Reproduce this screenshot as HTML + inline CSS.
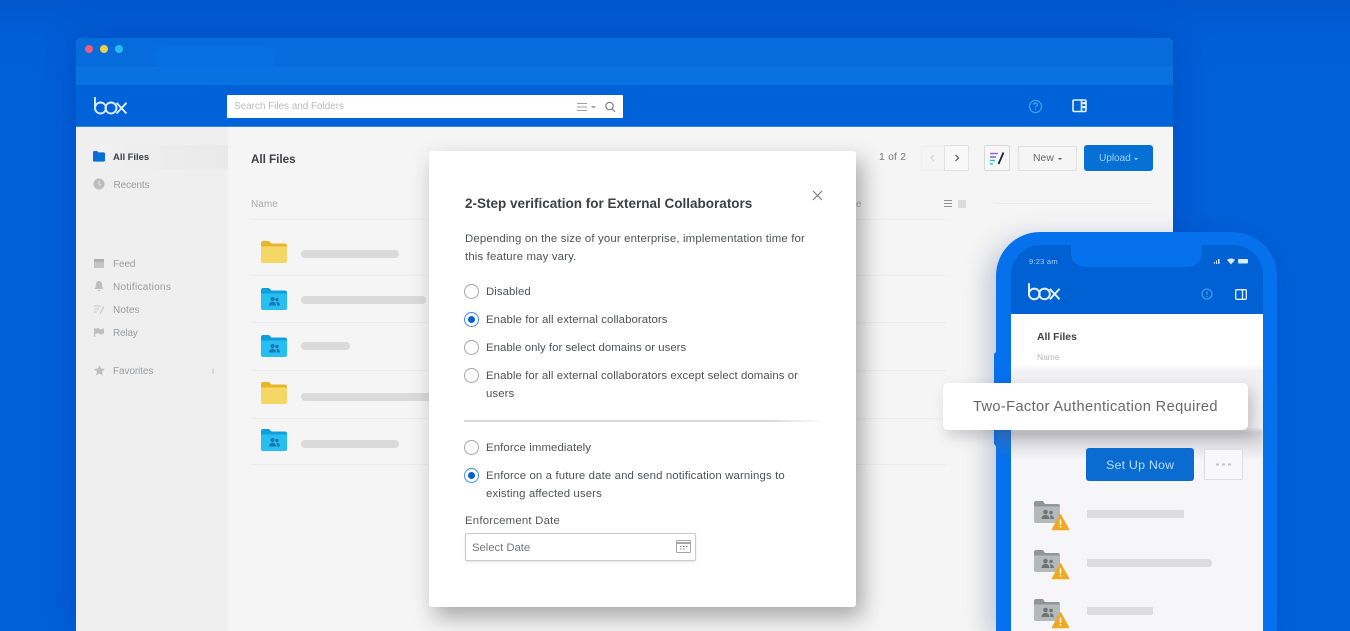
<!DOCTYPE html>
<html><head><meta charset="utf-8">
<style>
*{box-sizing:border-box}
html,body{margin:0;padding:0;overflow:hidden}
body{width:1350px;height:631px;overflow:hidden;position:relative;background:#0060da;font-family:"Liberation Sans",sans-serif;color:#4b4d50}
#clip{position:absolute;left:0;top:0;width:1350px;height:631px;overflow:hidden}
#stage{position:absolute;left:0;top:0;width:1350px;height:631px;overflow:hidden;background:linear-gradient(180deg,#0057cc 0,#005dd6 30px,#0060da 80px);filter:blur(.35px)}
.a{position:absolute}
.t{position:absolute;white-space:nowrap;line-height:1}
.bar{position:absolute;height:9px;border-radius:5px;background:#dadada}
.ln{position:absolute;height:1px;background:#ececec}
.radio{position:absolute;width:15px;height:15px;border-radius:50%;border:1.5px solid #a3a6a9;background:#fff}
.radio.on{border:1.5px solid #3d8fe0}
.radio.on:after{content:"";position:absolute;left:2.5px;top:2.5px;width:7px;height:7px;border-radius:50%;background:#0a5fc8}
.mt{font-size:11.4px;color:#4f5255;letter-spacing:.08px}
.nav{font-size:10px;color:#9a9c9e;letter-spacing:0}
svg{position:absolute;overflow:visible}
</style></head><body><div id="clip"><div id="stage">

<!-- browser window -->
<div class="a" style="left:76px;top:38px;width:1097px;height:593px;background:#f1f1f2;border-radius:6px 6px 0 0;box-shadow:0 0 36px rgba(0,40,130,.32)"></div>
<div class="a" style="left:76px;top:38px;width:1097px;height:48px;background:#066cdc;border-radius:6px 6px 0 0"></div>
<div class="a" style="left:155px;top:46px;width:120px;height:22px;background:#0870e0;border-radius:6px 6px 0 0;filter:blur(3px)"></div>
<div class="a" style="left:76px;top:67px;width:1097px;height:19px;background:#0872e0"></div>
<div class="a" style="left:85px;top:45px;width:8px;height:8px;border-radius:50%;background:#ef5a7d"></div>
<div class="a" style="left:100px;top:45px;width:8px;height:8px;border-radius:50%;background:#f2cc46"></div>
<div class="a" style="left:115px;top:45px;width:8px;height:8px;border-radius:50%;background:#27bdf0"></div>
<!-- header -->
<div class="a" style="left:76px;top:85px;width:1097px;height:42px;background:#0062d8;border-bottom:1px solid #2e86e6"></div>
<svg style="left:94px;top:97px" width="34" height="18" viewBox="0 0 34 18" fill="none" stroke="#dcecff" stroke-width="1.9">
<path d="M1 0v11.500"/><circle cx="6.500" cy="11" r="5.500"/><circle cx="17" cy="11" r="5.500"/><path d="M22.500 5.800l10 10.700M32.500 5.800l-10 10.700"/></svg>
<div class="a" style="left:227px;top:95px;width:396px;height:23px;background:#fff;border-radius:1px"></div>
<div class="t" style="left:234px;top:101.500px;font-size:10px;color:#b9bbbd;letter-spacing:-.05px">Search Files and Folders</div>
<svg style="left:576px;top:101px" width="40" height="12" viewBox="0 0 40 12" fill="none" stroke="#9ea0a2" stroke-width="1">
<path d="M1 2.500h10M1 6h10M1 9.500h10"/><path d="M15 5l2.500 2.500L20 5z" fill="#9ea0a2" stroke="none"/><circle cx="33.500" cy="5" r="3.700" stroke="#77797c" stroke-width="1.200"/><path d="M36.300 8l2.700 2.700" stroke="#77797c" stroke-width="1.200"/></svg>
<svg style="left:1028px;top:99px" width="15" height="15" viewBox="0 0 15 15" fill="none" stroke="#4aa0f0" stroke-width="1.200">
<circle cx="7.500" cy="7.500" r="6"/><path d="M5.800 5.600c.3-2.200 3.600-2 3.600.1 0 1.300-1.700 1.400-1.900 2.700M7.500 10v1"/></svg>
<svg style="left:1072px;top:99px" width="15" height="14" viewBox="0 0 15 14" fill="none" stroke="#e6f1ff" stroke-width="1.600">
<rect x="1" y="1" width="13" height="11.500" rx="1.200"/><path d="M9.500 1v11.500"/><path d="M10.500 3h3v2.200h-3zM10.500 7h3v2.200h-3z" fill="#e6f1ff" stroke="none"/></svg>

<!-- sidebar -->
<div class="a" style="left:76px;top:127px;width:152px;height:504px;background:#efeff0"></div>
<div class="a" style="left:228px;top:127px;width:945px;height:504px;background:#f5f5f5"></div>
<div class="a" style="left:100px;top:145px;width:128px;height:24px;background:linear-gradient(90deg,#f0f0f1,#e9e9ea)"></div>
<svg style="left:93px;top:151px" width="12" height="11" viewBox="0 0 12 11"><path d="M0 1.200C0 .5.500 0 1.200 0h3l1.300 1.400h5.200c.7 0 1.300.5 1.300 1.200v6.800c0 .7-.6 1.200-1.300 1.200H1.200C.5 10.600 0 10.100 0 9.400z" fill="#0a6ed8"/></svg>
<div class="t" style="left:113px;top:152.500px;font-size:9.500px;font-weight:bold;color:#3c3e41;letter-spacing:-.03px">All Files</div>
<svg style="left:93px;top:178px" width="12" height="12" viewBox="0 0 12 12"><circle cx="6" cy="6" r="5.500" fill="#bcbdbf"/><path d="M6 3v3.300l2 1.200" fill="none" stroke="#efeff0" stroke-width=".9"/></svg>
<div class="t nav" style="left:113.500px;top:181px;letter-spacing:-.1px">Recents</div>
<div class="a" style="left:94px;top:259px;width:10px;height:9px;background:#c3c4c6;border-top:3px solid #aeafb1"></div>
<div class="t nav" style="left:113px;top:260px;letter-spacing:-.1px">Feed</div>
<svg style="left:94px;top:281px" width="10" height="11" viewBox="0 0 10 11"><path d="M5 0c2.200 0 3.100 1.800 3.100 3.600 0 2.200.6 3.300 1.400 4.400H.5c.8-1.100 1.400-2.200 1.400-4.400C1.900 1.800 2.800 0 5 0zM3.600 9h2.800c0 1.400-2.800 1.400-2.800 0z" fill="#bdbec0"/></svg>
<div class="t nav" style="left:113px;top:283px;letter-spacing:.28px">Notifications</div>
<svg style="left:94px;top:305px" width="11" height="10" viewBox="0 0 11 10" fill="none" stroke="#c6c7c9" stroke-width="1"><path d="M0 1h7M0 4h5M0 7h3M10 1L6 9"/></svg>
<div class="t nav" style="left:113px;top:306px;letter-spacing:.1px">Notes</div>
<svg style="left:94px;top:328px" width="10" height="9" viewBox="0 0 10 9"><path d="M0 0h1.200v9H0zM1.200 1l3-1 2 1.500L10 .5v5L6.200 6.500l-2-1.500-3 1z" fill="#bdbec0"/></svg>
<div class="t nav" style="left:113px;top:329px;letter-spacing:-.2px">Relay</div>
<svg style="left:94px;top:365px" width="11" height="11" viewBox="0 0 11 11"><path d="M5.500 0l1.600 3.600 3.900.4-3 2.600.9 3.900-3.400-2-3.400 2 .9-3.900-3-2.600 3.900-.4z" fill="#bdbec0"/></svg>
<div class="t nav" style="left:113px;top:366.500px;letter-spacing:-.1px">Favorites</div>
<div class="a" style="left:212px;top:369px;width:2px;height:5px;background:#d5d6d7"></div>

<!-- main list -->
<div class="t" style="left:251px;top:153.500px;font-size:11.700px;font-weight:bold;color:#3f4144;letter-spacing:-.03px">All Files</div>
<div class="t" style="left:251px;top:200px;font-size:10px;color:#a9abad;letter-spacing:.05px">Name</div>
<div class="ln" style="left:252px;top:219px;width:180px"></div>
<div class="ln" style="left:856px;top:219px;width:90px"></div>
<div class="t" style="left:856px;top:200px;font-size:10px;color:#a9abad">e</div>
<div class="ln" style="left:252px;top:275px;width:180px"></div><div class="ln" style="left:856px;top:275px;width:90px"></div>
<div class="ln" style="left:252px;top:322px;width:180px"></div><div class="ln" style="left:856px;top:322px;width:90px"></div>
<div class="ln" style="left:252px;top:370px;width:180px"></div><div class="ln" style="left:856px;top:370px;width:90px"></div>
<div class="ln" style="left:252px;top:418px;width:180px"></div><div class="ln" style="left:856px;top:418px;width:90px"></div>
<div class="ln" style="left:252px;top:464px;width:180px"></div><div class="ln" style="left:856px;top:464px;width:90px"></div>

<svg width="0" height="0"><defs>
<g id="fy"><path d="M0 2C0 .9.900 0 2 0h6l2.500 2.500H24c1 0 2 .8 2 2V20c0 1-.9 2-2 2H2c-1.100 0-2-1-2-2z" fill="#e9b52c"/><path d="M0 5.500h26V20c0 1-.9 2-2 2H2c-1.100 0-2-1-2-2z" fill="#f5d765"/></g>
<g id="fb"><path d="M0 2C0 .9.900 0 2 0h6l2.500 2.500H24c1 0 2 .8 2 2V20c0 1-.9 2-2 2H2c-1.100 0-2-1-2-2z" fill="#0e9fdc"/><path d="M0 5.500h26V20c0 1-.9 2-2 2H2c-1.100 0-2-1-2-2z" fill="#27bff2"/><circle cx="11.500" cy="11" r="2.100" fill="#1579b0"/><circle cx="16" cy="11.500" r="1.700" fill="#1579b0"/><path d="M8 17.500c0-5 7-5 7 0zM15.500 14c2-.4 3.500 1 3.500 3.500h-3c0-1.500-.2-2.500-.5-3.500z" fill="#1579b0"/></g>
<g id="fg"><path d="M0 2C0 .9.900 0 2 0h7l2 3h13c1.100 0 2 .9 2 2v15c0 1-.9 2-2 2H2c-1.100 0-2-1-2-2z" fill="#8f9698"/><path d="M0 5.500h26V20c0 1-.9 2-2 2H2c-1.100 0-2-1-2-2z" fill="#b4b9ba"/><circle cx="11.500" cy="11" r="2.300" fill="#6d7476"/><circle cx="17" cy="11.500" r="1.800" fill="#6d7476"/><path d="M7.500 18c0-5.500 8-5.500 8 0zM16 14.500c2.300-.5 3.800 1 3.800 3.500H16.500c0-1.400-.2-2.500-.5-3.500z" fill="#6d7476"/></g>
<g id="wn"><path d="M8.500 1L16.500 15.500H.5z" fill="#efa922" stroke="#efa922" stroke-width="1.600" stroke-linejoin="round"/><path d="M8.500 5.500v5.200M8.500 12v1.500" stroke="#fff" stroke-width="1.500"/></g>
</defs></svg>
<svg style="left:261px;top:241px" width="26" height="22"><use href="#fy"/></svg>
<svg style="left:261px;top:288px" width="26" height="22"><use href="#fb"/></svg>
<svg style="left:261px;top:335px" width="26" height="22"><use href="#fb"/></svg>
<svg style="left:261px;top:382px" width="26" height="22"><use href="#fy"/></svg>
<svg style="left:261px;top:429px" width="26" height="22"><use href="#fb"/></svg>
<div class="bar" style="left:301px;top:250px;width:98px;height:8px"></div>
<div class="bar" style="left:301px;top:296px;width:125px;height:8px"></div>
<div class="bar" style="left:301px;top:342px;width:49px;height:8px"></div>
<div class="bar" style="left:301px;top:393px;width:130px;height:8px;border-radius:4px 0 0 4px"></div>
<div class="bar" style="left:301px;top:440px;width:98px;height:8px"></div>

<!-- toolbar -->
<div class="t" style="left:879px;top:152.500px;font-size:10.400px;color:#77797c;letter-spacing:.2px">1 of 2</div>
<div class="a" style="left:921px;top:146px;width:24px;height:25px;border:1px solid #f0f0f0"></div>
<div class="a" style="left:944px;top:145px;width:25px;height:26px;border:1px solid #e3e3e4;background:#f8f8f8"></div>
<svg style="left:930px;top:154px" width="6" height="9" fill="none" stroke="#d5d5d6" stroke-width="1.200"><path d="M4 1L1 4l3 3"/></svg>
<svg style="left:954px;top:154px" width="6" height="9" fill="none" stroke="#55585b" stroke-width="1.200"><path d="M1.500 1l3 3-3 3"/></svg>
<div class="a" style="left:984px;top:145px;width:26px;height:26px;border:1px solid #d8d8da;border-radius:2px;background:#f7f7f7"></div>
<svg style="left:990px;top:152px" width="15" height="13" fill="none" stroke-width="1.400"><path d="M0 1.500h8" stroke="#a45ad6"/><path d="M0 5h6" stroke="#4a6fe0"/><path d="M0 8.500h5" stroke="#2fbfcf"/><path d="M0 12h3" stroke="#2fbfcf"/><path d="M13.500 .5L8.500 12" stroke="#17223a" stroke-width="1.800"/></svg>
<div class="a" style="left:1018px;top:146px;width:59px;height:25px;border:1px solid #e0e0e1;background:#f5f5f5;border-radius:2px"></div>
<div class="t" style="left:1033px;top:153.500px;font-size:10.400px;color:#66686b;letter-spacing:.05px">New</div>
<div class="a" style="left:1058px;top:158px;border:2.200px solid transparent;border-top:2.600px solid #55585b;border-bottom:0"></div>
<div class="a" style="left:1084px;top:145px;width:69px;height:26px;background:#0670d5;border-radius:3px"></div>
<div class="t" style="left:1099px;top:153.500px;font-size:10.200px;color:#9cd0f8;letter-spacing:-.1px">Upload</div>
<div class="a" style="left:1134px;top:158px;border:2.200px solid transparent;border-top:2.600px solid #b9dffb;border-bottom:0"></div>
<svg style="left:944px;top:200px" width="24" height="9"><path d="M0 .5h8M0 3.500h8M0 6.500h8" stroke="#8f9193" stroke-width="1.100"/><rect x="14" y="0" width="8" height="8" fill="#dcdcdd"/></svg>
<div class="ln" style="left:993px;top:203px;width:160px;background:#eaeaea"></div>

<!-- modal -->
<div class="a" style="left:429px;top:151px;width:427px;height:456px;background:#fff;border-radius:3px;box-shadow:6px 10px 22px rgba(40,40,40,.38)"></div>
<div class="t" style="left:465px;top:196.500px;font-size:13.500px;font-weight:bold;color:#3e4043;letter-spacing:0">2-Step verification for External Collaborators</div>
<svg style="left:812px;top:190px" width="11" height="11" fill="none" stroke="#77797c" stroke-width="1.100"><path d="M1 1l9 9M10 1l-9 9"/></svg>
<div class="t mt" style="left:465px;top:233.500px;letter-spacing:.155px">Depending on the size of your enterprise, implementation time for</div>
<div class="t mt" style="left:465px;top:251.500px;letter-spacing:.155px">this feature may vary.</div>
<div class="radio" style="left:464px;top:284px"></div>
<div class="t mt" style="left:486px;top:287px;letter-spacing:.05px">Disabled</div>
<div class="radio on" style="left:464px;top:312px"></div>
<div class="t mt" style="left:486px;top:315px">Enable for all external collaborators</div>
<div class="radio" style="left:464px;top:340px"></div>
<div class="t mt" style="left:486px;top:343px;letter-spacing:.02px">Enable only for select domains or users</div>
<div class="radio" style="left:464px;top:368px"></div>
<div class="t mt" style="left:486px;top:371px;letter-spacing:.07px">Enable for all external collaborators except select domains or</div>
<div class="t mt" style="left:486px;top:389px">users</div>
<div class="a" style="left:464px;top:420px;width:360px;height:1.500px;background:linear-gradient(90deg,#d8d8d9,#d8d8d9 85%,#fff)"></div>
<div class="radio" style="left:464px;top:440px"></div>
<div class="t mt" style="left:486px;top:443px;letter-spacing:.1px">Enforce immediately</div>
<div class="radio on" style="left:464px;top:468px"></div>
<div class="t mt" style="left:486px;top:471px;letter-spacing:.13px">Enforce on a future date and send notification warnings to</div>
<div class="t mt" style="left:486px;top:489px;letter-spacing:.12px">existing affected users</div>
<div class="t" style="left:465px;top:515.500px;font-size:11.400px;color:#55585b;letter-spacing:.2px">Enforcement Date</div>
<div class="a" style="left:465px;top:533px;width:231px;height:28px;border:1px solid #c9cacc;border-radius:2px;box-shadow:0 1px 2px rgba(0,0,0,.12);background:#fff"></div>
<div class="t" style="left:472px;top:543px;font-size:11.400px;color:#77797c;letter-spacing:-.07px">Select Date</div>
<svg style="left:676px;top:540px" width="15" height="13" fill="none"><rect x=".5" y=".5" width="14" height="12" rx="1" stroke="#a3a5a7"/><path d="M.5 3h14" stroke="#a3a5a7" stroke-width="2"/><path d="M4 6.500h1.500M7 6.500h1.500M10 6.500h1.500M4 9h1.500M7 9h1.500" stroke="#808285"/></svg>

<!-- phone -->
<div class="a" style="left:996px;top:232px;width:281px;height:399px;background:#0671ec;border-radius:44px 44px 0 0;box-shadow:-8px 6px 26px rgba(0,30,90,.22)"></div>
<div class="a" style="left:994px;top:352px;width:10px;height:94px;background:#0671ec;border-radius:3px"></div>
<div class="a" style="left:1011px;top:245px;width:252px;height:386px;background:#0061d5;border-radius:30px 30px 0 0"></div>
<div class="a" style="left:1071px;top:245px;width:131px;height:22px;background:#0671ec;border-radius:0 0 14px 14px"></div>
<div class="t" style="left:1029px;top:258px;font-size:7.600px;color:#a9d2fb;letter-spacing:.2px">9:23 am</div>
<svg style="left:1213px;top:257px" width="36" height="8"><path d="M1 5h1v2H1zM3 3.500h1V7H3zM5 2h1.500v5H5z" fill="#dcecff"/><path d="M14 3c2-2 6-2 8 0l-4 4.500z" fill="#dcecff"/><rect x="25" y="2" width="10" height="4.500" rx="1" fill="#dcecff"/></svg>
<svg style="left:1028px;top:283px" width="33" height="18" viewBox="0 0 34 18" fill="none" stroke="#e6f1ff" stroke-width="2"><path d="M1 0v11.500"/><circle cx="6.500" cy="11" r="5.500"/><circle cx="17" cy="11" r="5.500"/><path d="M22.500 5.800l10 10.700M32.500 5.800l-10 10.700"/></svg>
<svg style="left:1201px;top:288px" width="12" height="12" fill="none" stroke="#4aa0f0" stroke-width="1.100"><circle cx="6" cy="6" r="5"/><path d="M6 3.200v3.500M6 8v1"/></svg>
<svg style="left:1235px;top:289px" width="12" height="11" fill="none" stroke="#e6f1ff" stroke-width="1.300"><rect x=".7" y=".7" width="10.600" height="9.600" rx="1"/><path d="M7.500 .7v9.600"/></svg>
<div class="a" style="left:1011px;top:314px;width:252px;height:317px;background:#f6f6f9"></div>
<div class="a" style="left:1011px;top:314px;width:252px;height:56px;background:linear-gradient(180deg,#fff 0,#fff 50px,#f4f4f5 56px)"></div>
<div class="t" style="left:1037px;top:332.500px;font-size:10.400px;font-weight:bold;color:#3f4144;letter-spacing:0">All Files</div>
<div class="t" style="left:1037px;top:352.500px;font-size:8.400px;color:#b5b7b9;letter-spacing:.05px">Name</div>
<div class="a" style="left:1011px;top:370px;width:252px;height:60px;background:#f1f1f3"></div>
<div class="a" style="left:996px;top:430px;width:267px;height:30px;background:linear-gradient(180deg,rgba(120,120,130,.34),rgba(120,120,130,0));filter:blur(1.500px)"></div>

<div class="a" style="left:943px;top:383px;width:305px;height:47px;background:#fff;border-radius:5px;box-shadow:5px 6px 14px rgba(40,40,50,.22)"></div>
<div class="t" style="left:973px;top:399.500px;font-size:14.600px;color:#66686b;letter-spacing:.38px">Two-Factor Authentication Required</div>

<div class="a" style="left:1086px;top:448px;width:108px;height:33px;background:#0a6bd0;border-radius:3px"></div>
<div class="t" style="left:1106px;top:459px;font-size:12.400px;color:#b6def9;letter-spacing:.22px">Set Up Now</div>
<div class="a" style="left:1204px;top:449px;width:39px;height:31px;border:1px solid #dedee1;border-radius:2px;background:#f8f8fa"></div>
<svg style="left:1215px;top:463px" width="18" height="4"><path d="M1 1.500h3M7 1.500h3M13 1.500h3" stroke="#c3c4c7" stroke-width="2"/></svg>
<svg style="left:1034px;top:501px" width="26" height="22"><use href="#fg"/></svg>
<svg style="left:1052px;top:514px" width="18" height="16"><use href="#wn"/></svg>
<svg style="left:1034px;top:550px" width="26" height="22"><use href="#fg"/></svg>
<svg style="left:1052px;top:563px" width="18" height="16"><use href="#wn"/></svg>
<svg style="left:1034px;top:599px" width="26" height="22"><use href="#fg"/></svg>
<div class="a" style="left:1052px;top:612px;width:18px;height:19px;overflow:hidden"><svg style="left:0;top:0" width="18" height="16"><use href="#wn"/></svg></div>
<div class="a" style="left:1087px;top:510px;width:97px;height:8px;background:#dcdcdf;border-radius:1px"></div>
<div class="a" style="left:1087px;top:559px;width:125px;height:8px;background:#dcdcdf;border-radius:1px 4px 4px 1px"></div>
<div class="a" style="left:1087px;top:607px;width:66px;height:8px;background:#dcdcdf;border-radius:1px"></div>
</div></div></body></html>
